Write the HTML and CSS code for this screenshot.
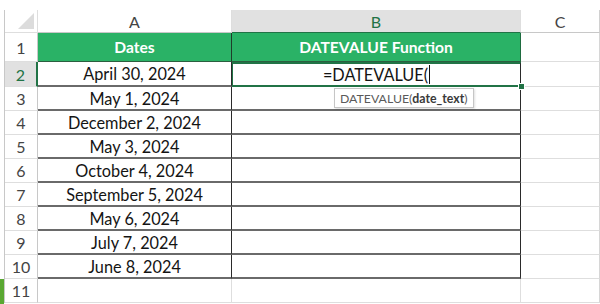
FILE: index.html
```html
<!DOCTYPE html>
<html>
<head>
<meta charset="utf-8">
<link rel="stylesheet" href="styles.css">
</head>
<body>
<div class="sheet">
  <div class="corner"><span class="tri"></span></div>
  <div class="colh">A</div>
  <div class="colh sel">B</div>
  <div class="colh last">C</div>

  <div class="rowh">1</div>
  <div class="cell head a">Dates</div>
  <div class="cell head b">DATEVALUE Function</div>
  <div class="cell c"></div>

  <div class="rowh sel">2</div>
  <div class="cell a t">April 30, 2024</div>
  <div class="cell b t active"><span class="formula">=DATEVALUE(</span><span class="caret"></span><span class="handle"></span>
    <div class="tip">DATEVALUE(<b>date_text</b>)</div>
  </div>
  <div class="cell c"></div>

  <div class="rowh">3</div>
  <div class="cell a t">May 1, 2024</div>
  <div class="cell b t"></div>
  <div class="cell c"></div>

  <div class="rowh">4</div>
  <div class="cell a t">December 2, 2024</div>
  <div class="cell b t"></div>
  <div class="cell c"></div>

  <div class="rowh">5</div>
  <div class="cell a t">May 3, 2024</div>
  <div class="cell b t"></div>
  <div class="cell c"></div>

  <div class="rowh">6</div>
  <div class="cell a t">October 4, 2024</div>
  <div class="cell b t"></div>
  <div class="cell c"></div>

  <div class="rowh">7</div>
  <div class="cell a t">September 5, 2024</div>
  <div class="cell b t"></div>
  <div class="cell c"></div>

  <div class="rowh">8</div>
  <div class="cell a t">May 6, 2024</div>
  <div class="cell b t"></div>
  <div class="cell c"></div>

  <div class="rowh">9</div>
  <div class="cell a t">July 7, 2024</div>
  <div class="cell b t"></div>
  <div class="cell c"></div>

  <div class="rowh">10</div>
  <div class="cell a t">June 8, 2024</div>
  <div class="cell b t"></div>
  <div class="cell c"></div>

  <div class="rowh">11</div>
  <div class="cell a"></div>
  <div class="cell b"></div>
  <div class="cell c"></div>
</div>
<div class="sheettab"></div>
</body>
</html>
```
FILE: styles.css
```css
html, body {
  margin: 0;
  padding: 0;
  background: #ffffff;
}
body {
  width: 600px;
  height: 304px;
  overflow: hidden;
  position: relative;
  font-family: Lato, "Open Sans", sans-serif;
}
.sheet {
  margin: 10px 0 0 4px;
  display: grid;
  grid-template-columns: 33px 194px 289px 79px;
  grid-template-rows: 23px 29px 25px repeat(8, 24px) 24px;
  border-left: 1px solid #c8c8c8;
  width: 595px;
}
.corner, .colh, .rowh, .cell {
  box-sizing: border-box;
  border-right: 1px solid #dedede;
  border-bottom: 1px solid #dedede;
  display: flex;
  align-items: center;
  justify-content: center;
}
.corner {
  position: relative;
  background: #ffffff;
}
.tri {
  position: absolute;
  right: 3px;
  bottom: 3px;
  width: 0;
  height: 0;
  border-left: 16px solid transparent;
  border-bottom: 16px solid #dcdcdc;
}
.colh {
  font-size: 16px;
  color: #444444;
  background: #ffffff;
  border-bottom-color: #c8c8c8;
}
.colh.sel {
  background: #e1e1e1;
  color: #217346;
  border-bottom: 1px solid #217346;
}
.colh.last {
  border-right-color: #d0d0d0;
}
.rowh {
  font-size: 16px;
  color: #444444;
  background: #ffffff;
  border-right-color: #c8c8c8;
}
.rowh.sel {
  background: #e1e1e1;
  color: #217346;
  border-right: 2px solid #217346;
}
.cell {
  font-size: 16.3px;
  color: #141414;
  position: relative;
}
.cell.c {
  border-right-color: #d6d6d6;
}
.cell.head {
  background: #2ab266;
  color: #ffffff;
  font-weight: bold;
  font-size: 15.6px;
  border-bottom: 1px solid #2b5e3f;
}
.cell.head.a {
  border-right: 1px solid #1f3d2a;
}
.cell.head.b {
  border-right: 1px solid #1e6b3f;
}
.cell.t {
  border-bottom: 2px solid #6a6a6a;
}
.cell.t.a {
  border-right: 1px solid #2a2a2a;
}
.cell.t.b {
  border-right: 1px solid #2a2a2a;
}
.cell.active {
  border: 2px solid #217346;
  border-left-width: 1px;
}
.formula {
  color: #141414;
}
.caret {
  display: inline-block;
  width: 1px;
  height: 19px;
  background: #111111;
  margin-left: 1px;
}
.handle {
  position: absolute;
  right: -5px;
  bottom: -5px;
  width: 5px;
  height: 5px;
  background: #217346;
  border: 1px solid #ffffff;
  z-index: 3;
}
.tip {
  position: absolute;
  left: 101px;
  top: 24px;
  z-index: 4;
  height: 20px;
  padding: 0 5px;
  box-sizing: border-box;
  background: #ffffff;
  border: 1px solid #c6c6c6;
  box-shadow: 1px 1px 2px rgba(0,0,0,0.12);
  font-size: 12.3px;
  color: #5a5a5a;
  display: flex;
  align-items: center;
  white-space: nowrap;
}
.tip b {
  color: #3a3a3a;
}
.sheettab {
  position: absolute;
  left: 0;
  top: 279px;
  width: 4px;
  height: 25px;
  background: #5aa832;
}
```
